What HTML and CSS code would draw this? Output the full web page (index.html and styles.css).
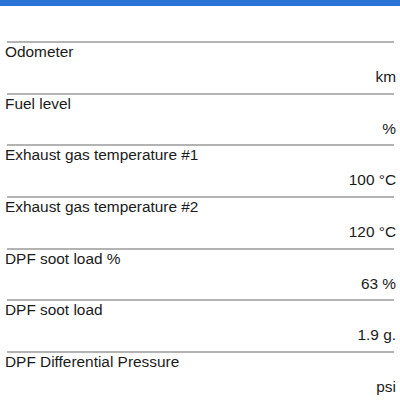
FILE: index.html
```html
<!DOCTYPE html>
<html>
<head>
<meta charset="utf-8">
<link rel="stylesheet" href="styles.css">
</head>
<body>
<div class="topbar"></div>
<div class="spacer"></div>
<div class="list">
  <div class="row"><div class="label">Odometer</div><div class="value">km</div></div>
  <div class="row"><div class="label">Fuel level</div><div class="value">%</div></div>
  <div class="row"><div class="label">Exhaust gas temperature #1</div><div class="value">100 °C</div></div>
  <div class="row"><div class="label">Exhaust gas temperature #2</div><div class="value">120 °C</div></div>
  <div class="row"><div class="label">DPF soot load %</div><div class="value">63 %</div></div>
  <div class="row"><div class="label">DPF soot load</div><div class="value">1.9 g.</div></div>
  <div class="row"><div class="label">DPF Differential Pressure</div><div class="value">psi</div></div>
</div>
</body>
</html>
```
FILE: styles.css
```css
html, body {
  margin: 0;
  padding: 0;
  background: #ffffff;
}
body {
  font-family: "Liberation Sans", Arial, sans-serif;
  font-size: 15.4px;
  color: #1a1a1a;
  width: 400px;
  height: 400px;
  overflow: hidden;
}
.topbar {
  height: 6px;
  background: #2a72d6;
}
.spacer {
  height: 35px;
}
.row {
  position: relative;
  padding: 2px 4px 6.67px 5px;
}
.row::before {
  content: "";
  position: absolute;
  top: 0;
  left: 7px;
  right: 6px;
  height: 2px;
  background: #b3b3b3;
}
.label {
  line-height: 18px;
  height: 18px;
  white-space: nowrap;
}
.value {
  margin-top: 7px;
  line-height: 18px;
  height: 18px;
  text-align: right;
}
```
